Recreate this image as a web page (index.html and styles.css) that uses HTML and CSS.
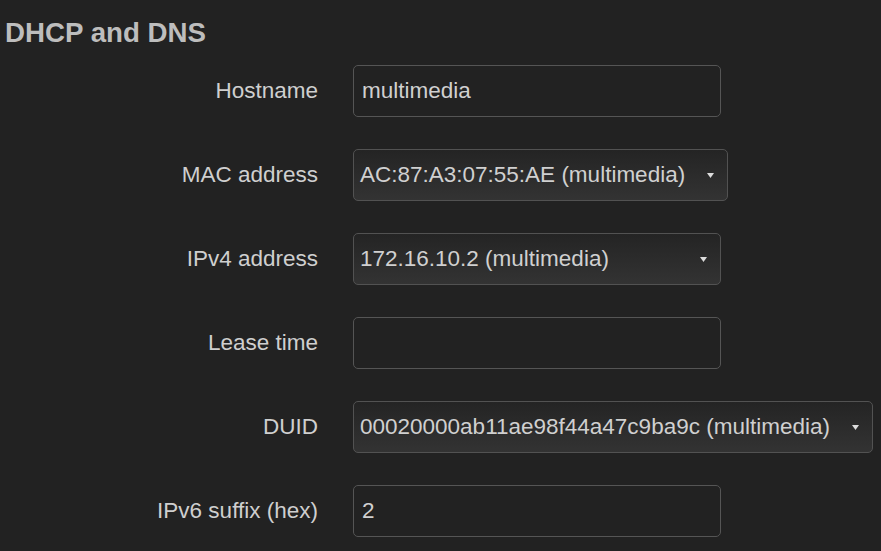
FILE: index.html
```html
<!DOCTYPE html>
<html>
<head>
<meta charset="utf-8">
<link rel="stylesheet" href="styles.css">
</head>
<body>
<h2 class="title">DHCP and DNS</h2>
<div class="form">
  <div class="row">
    <div class="label">Hostname</div>
    <div class="field"><div class="input">multimedia</div></div>
  </div>
  <div class="row">
    <div class="label">MAC address</div>
    <div class="field"><div class="select"><span class="val">AC:87:A3:07:55:AE (multimedia)</span><svg class="arrow" width="7" height="5" viewBox="0 0 7 5"><path d="M0 0H7L3.5 5Z" fill="#dcdcdc"/></svg></div></div>
  </div>
  <div class="row">
    <div class="label">IPv4 address</div>
    <div class="field"><div class="select"><span class="val">172.16.10.2 (multimedia)</span><svg class="arrow" width="7" height="5" viewBox="0 0 7 5"><path d="M0 0H7L3.5 5Z" fill="#dcdcdc"/></svg></div></div>
  </div>
  <div class="row">
    <div class="label">Lease time</div>
    <div class="field"><div class="input"></div></div>
  </div>
  <div class="row">
    <div class="label">DUID</div>
    <div class="field"><div class="select"><span class="val">00020000ab11ae98f44a47c9ba9c (multimedia)</span><svg class="arrow" width="7" height="5" viewBox="0 0 7 5"><path d="M0 0H7L3.5 5Z" fill="#dcdcdc"/></svg></div></div>
  </div>
  <div class="row">
    <div class="label">IPv6 suffix (hex)</div>
    <div class="field"><div class="input">2</div></div>
  </div>
</div>
</body>
</html>
```
FILE: styles.css
```css
html, body {
  margin: 0;
  padding: 0;
  background: #222222;
  height: 100%;
  overflow: hidden;
}
body {
  font-family: "Liberation Sans", Arial, sans-serif;
  color: #cccccc;
  font-size: 22.5px;
}
.title {
  margin: 17px 0 0 0;
  padding-left: 5px;
  font-size: 27.7px;
  line-height: 32px;
  font-weight: bold;
  color: #bdbdbd;
}
.form {
  margin-top: 16px;
  display: flex;
  flex-direction: column;
  gap: 32px;
}
.row {
  display: grid;
  grid-template-columns: 318px auto;
  column-gap: 35px;
  align-items: center;
}
.label {
  text-align: right;
  color: #cfcfcf;
  line-height: 26px;
}
.field {
  display: flex;
}
.input {
  box-sizing: border-box;
  width: 368px;
  height: 52px;
  border: 1px solid #555555;
  border-radius: 5px;
  background: #222222;
  padding: 0 8px;
  display: flex;
  align-items: center;
  color: #d0d0d0;
}
.select {
  box-sizing: border-box;
  min-width: 368px;
  height: 52px;
  border: 1px solid #525252;
  border-radius: 5px;
  background: linear-gradient(to bottom, #242424, #333333);
  padding: 0 13px 0 6px;
  display: flex;
  align-items: center;
  color: #d0d0d0;
  white-space: nowrap;
}
.select .val {
  flex: 1;
}
.select .arrow {
  margin-left: 22px;
  flex: none;
  margin-top: 1px;
}
```
